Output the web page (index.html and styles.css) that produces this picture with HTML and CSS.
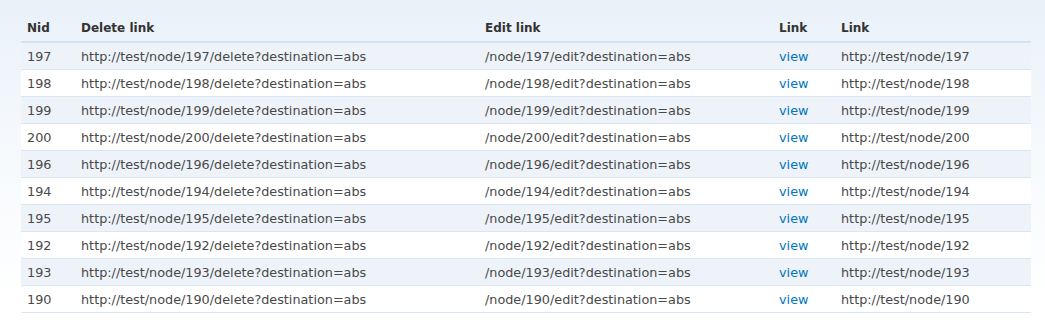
FILE: index.html
```html
<!DOCTYPE html>
<html>
<head>
<meta charset="utf-8">
<link rel="stylesheet" href="styles.css">
</head>
<body>
<div class="page">
<table class="views-table">
  <colgroup>
    <col class="c-nid"><col class="c-del"><col class="c-edit"><col class="c-view"><col class="c-link">
  </colgroup>
  <thead>
    <tr><th>Nid</th><th>Delete link</th><th>Edit link</th><th>Link</th><th>Link</th></tr>
  </thead>
  <tbody>
    <tr class="odd"><td>197</td><td>http://test/node/197/delete?destination=abs</td><td>/node/197/edit?destination=abs</td><td><a href="#">view</a></td><td>http://test/node/197</td></tr>
    <tr class="even"><td>198</td><td>http://test/node/198/delete?destination=abs</td><td>/node/198/edit?destination=abs</td><td><a href="#">view</a></td><td>http://test/node/198</td></tr>
    <tr class="odd"><td>199</td><td>http://test/node/199/delete?destination=abs</td><td>/node/199/edit?destination=abs</td><td><a href="#">view</a></td><td>http://test/node/199</td></tr>
    <tr class="even"><td>200</td><td>http://test/node/200/delete?destination=abs</td><td>/node/200/edit?destination=abs</td><td><a href="#">view</a></td><td>http://test/node/200</td></tr>
    <tr class="odd"><td>196</td><td>http://test/node/196/delete?destination=abs</td><td>/node/196/edit?destination=abs</td><td><a href="#">view</a></td><td>http://test/node/196</td></tr>
    <tr class="even"><td>194</td><td>http://test/node/194/delete?destination=abs</td><td>/node/194/edit?destination=abs</td><td><a href="#">view</a></td><td>http://test/node/194</td></tr>
    <tr class="odd"><td>195</td><td>http://test/node/195/delete?destination=abs</td><td>/node/195/edit?destination=abs</td><td><a href="#">view</a></td><td>http://test/node/195</td></tr>
    <tr class="even"><td>192</td><td>http://test/node/192/delete?destination=abs</td><td>/node/192/edit?destination=abs</td><td><a href="#">view</a></td><td>http://test/node/192</td></tr>
    <tr class="odd"><td>193</td><td>http://test/node/193/delete?destination=abs</td><td>/node/193/edit?destination=abs</td><td><a href="#">view</a></td><td>http://test/node/193</td></tr>
    <tr class="even"><td>190</td><td>http://test/node/190/delete?destination=abs</td><td>/node/190/edit?destination=abs</td><td><a href="#">view</a></td><td>http://test/node/190</td></tr>
  </tbody>
</table>
</div>
</body>
</html>
```

FILE: styles.css
```css
html, body {
  margin: 0;
  padding: 0;
}
body {
  width: 1045px;
  height: 328px;
  background: linear-gradient(to bottom, #e9f1f9 0px, #f4f8fc 120px, #ffffff 300px);
  font-family: "DejaVu Sans", Verdana, sans-serif;
  font-size: 12px;
  color: #494949;
}
.page {
  padding: 15px 14px 0 21px;
}
.views-table {
  border-collapse: collapse;
  width: 1010px;
  table-layout: fixed;
}
.c-nid { width: 54px; }
.c-del { width: 404px; }
.c-edit { width: 294px; }
.c-view { width: 62px; }
.c-link { width: 196px; }
.views-table th {
  text-align: left;
  font-weight: bold;
  color: #333;
  padding: 0 6px;
  height: 26px;
  border-bottom: 2px solid #d3e3f3;
  vertical-align: middle;
}
.views-table td {
  padding: 1px 6px 0;
  height: 25px;
  font-size: 12.8px;
  border-bottom: 1px solid #d9e7f4;
  white-space: nowrap;
  vertical-align: middle;
}
.views-table tr.odd td {
  background: #edf3f9;
}
.views-table tr.even td {
  background: #ffffff;
}
.views-table a {
  color: #0074bd;
  text-decoration: none;
}
```
